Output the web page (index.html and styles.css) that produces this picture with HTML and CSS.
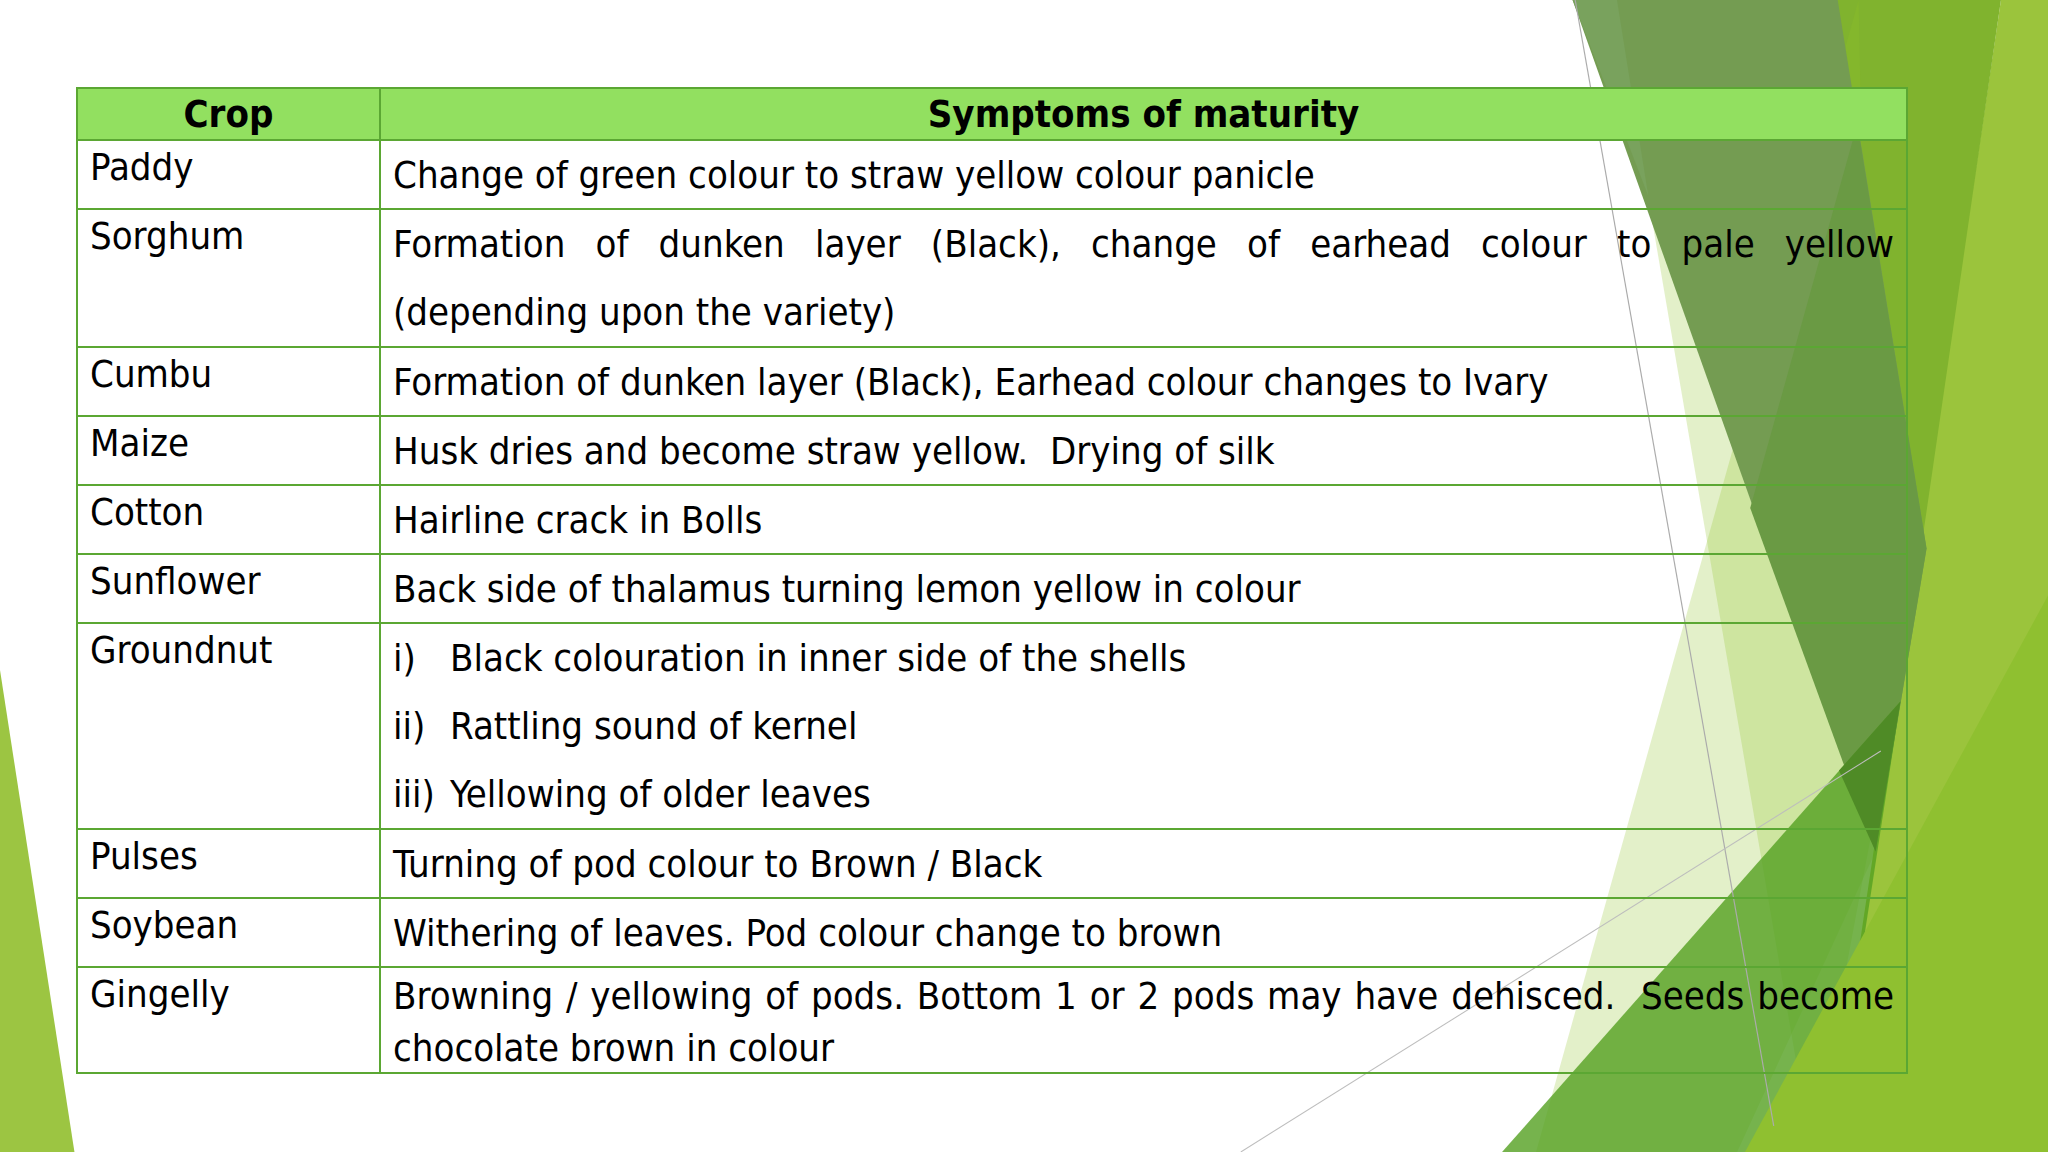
FILE: index.html
```html
<!DOCTYPE html>
<html lang="en">
<head>
<meta charset="utf-8">
<title>Symptoms of maturity</title>
<link rel="stylesheet" href="styles.css">
</head>
<body>
<div class="slide">
  <svg class="bg" viewBox="0 0 1568 882" preserveAspectRatio="none" aria-hidden="true">
    <polygon points="1532,0 1568,0 1568,882 1400,882" fill="#9bc43c"/>
    <polygon points="1398,0 1532,0 1472,412 1446,590" fill="#80b32e"/>
    <polygon points="1423,0 1436,652 1330,882 1176,882" fill="#90c226" fill-opacity="0.25"/>
    <polygon points="1236,0 1300,0 1440,600 1387,882" fill="#90c226" fill-opacity="0.25"/>
    <polygon points="1204,0 1407,0 1475,420 1436,652" fill="#749c52"/>
    <polygon points="1204,0 1238,0 1262,150" fill="#79a25d"/>
    <polygon points="1422,95 1475,420 1436,652 1340,389" fill="#6a9a44"/>
    <polygon points="1150,882 1455,537 1402,882" fill="#54a021" fill-opacity="0.8"/>
    <polygon points="1455,537 1436,652 1408,590" fill="#4f8b26"/>
    <polygon points="1336,882 1568,456 1568,882" fill="#8fc030"/>
    <line x1="1206" y1="0" x2="1358" y2="862" stroke="#ababab" stroke-width="0.9"/>
    <line x1="950" y1="882" x2="1440" y2="575" stroke="#bdbdbd" stroke-width="0.8"/>
    <polygon points="0,513 57,882 0,882" fill="#9cc542"/>
  </svg>

  <table class="grid">
    <colgroup><col class="c1"><col class="c2"></colgroup>
    <thead>
      <tr class="hd"><th>Crop</th><th>Symptoms of maturity</th></tr>
    </thead>
    <tbody>
      <tr class="r1"><td class="crop">Paddy</td><td class="sym"><div class="txt">Change of green colour to straw yellow colour panicle</div></td></tr>
      <tr class="r2"><td class="crop">Sorghum</td><td class="sym"><div class="txt"><span class="jl">Formation of dunken layer (Black), change of earhead colour to pale yellow</span>(depending upon the variety)</div></td></tr>
      <tr class="r1"><td class="crop">Cumbu</td><td class="sym"><div class="txt">Formation of dunken layer (Black), Earhead colour changes to Ivary</div></td></tr>
      <tr class="r1"><td class="crop">Maize</td><td class="sym"><div class="txt">Husk dries and become straw yellow.&nbsp; Drying of silk</div></td></tr>
      <tr class="r1"><td class="crop">Cotton</td><td class="sym"><div class="txt">Hairline crack in Bolls</div></td></tr>
      <tr class="r1"><td class="crop">Sunflower</td><td class="sym"><div class="txt">Back side of thalamus turning lemon yellow in colour</div></td></tr>
      <tr class="r3"><td class="crop">Groundnut</td><td class="sym"><div class="txt">
        <div class="li"><span class="n">i)</span><span>Black colouration in inner side of the shells</span></div>
        <div class="li"><span class="n">ii)</span><span>Rattling sound of kernel</span></div>
        <div class="li"><span class="n">iii)</span><span>Yellowing of older leaves</span></div>
      </div></td></tr>
      <tr class="r1"><td class="crop">Pulses</td><td class="sym"><div class="txt">Turning of pod colour to Brown / Black</div></td></tr>
      <tr class="r1"><td class="crop">Soybean</td><td class="sym"><div class="txt">Withering of leaves. Pod colour change to brown</div></td></tr>
      <tr class="rg"><td class="crop">Gingelly</td><td class="sym tight"><div class="txt"><span class="jl">Browning / yellowing of pods. Bottom 1 or 2 pods may have dehisced.&nbsp; Seeds become</span>chocolate brown in colour</div></td></tr>
    </tbody>
  </table>
</div>
</body>
</html>
```

FILE: styles.css
```css
html, body {
  margin: 0;
  padding: 0;
  background: #ffffff;
}

.slide {
  position: relative;
  width: 2048px;
  height: 1152px;
  overflow: hidden;
  box-sizing: border-box;
  padding: 87px 0 0 76px;
  background: #ffffff;
  font-family: "DejaVu Sans Condensed", "DejaVu Sans", sans-serif;
  font-stretch: condensed;
  color: #000000;
}

.bg {
  position: absolute;
  left: 0;
  top: 0;
  width: 2048px;
  height: 1152px;
  z-index: 0;
}

.grid {
  position: relative;
  z-index: 1;
  border-collapse: collapse;
  table-layout: fixed;
  width: 1832px;
  font-size: 38px;
}

.c1 { width: 303px; }

.grid th,
.grid td {
  border: 2px solid #5ba733;
  padding: 0 12px;
  vertical-align: top;
  text-align: left;
}

.hd { height: 52px; }

.hd th {
  background: #92e060;
  line-height: 50px;
  text-align: center;
  vertical-align: middle;
  font-weight: bold;
  padding: 0;
}

.r1 { height: 69px; }
.r2 { height: 138px; }
.r3 { height: 206px; }
.rg { height: 106px; }

.crop {
  line-height: 52px;
}

.sym {
  padding-top: 8px;
  line-height: 68px;
  text-align: justify;
}

.txt {
  margin-bottom: -9px;
}

.sym.tight {
  padding-top: 2px;
  line-height: 52px;
}

.sym.tight .txt {
  margin-bottom: -3px;
}

.jl {
  display: block;
  text-align: justify;
  text-align-last: justify;
}

.li {
  display: flex;
}

.n {
  flex: none;
  width: 57px;
}
```
